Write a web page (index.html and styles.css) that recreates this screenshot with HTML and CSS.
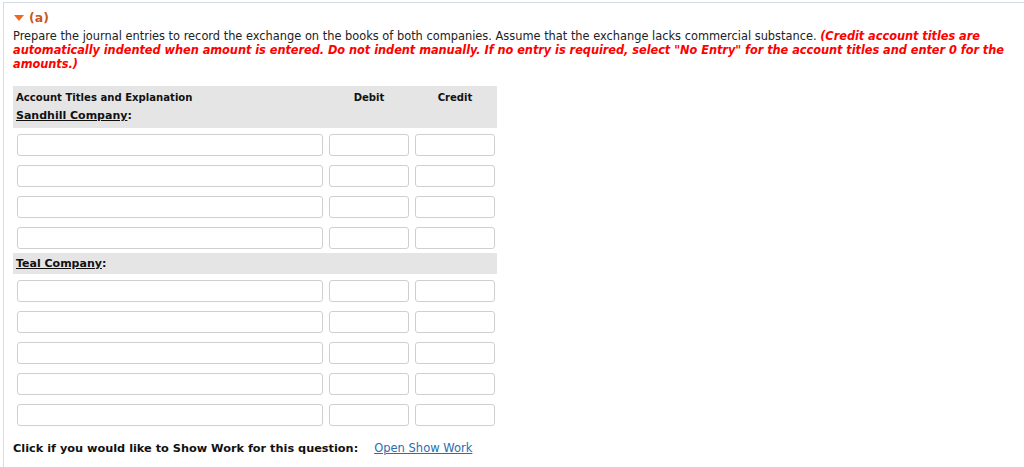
FILE: index.html
```html
<!DOCTYPE html>
<html>
<head>
<meta charset="utf-8">
<link rel="stylesheet" href="styles.css">
</head>
<body>
<div class="panel">
  <div class="part-head">
    <svg class="tri" width="10" height="6" viewBox="0 0 10 6"><polygon points="0,0 10,0 5,6" fill="#f26522"/></svg>
    <span class="part-label">(a)</span>
  </div>
  <p class="prompt">Prepare the journal entries to record the exchange on the books of both companies. Assume that the exchange lacks commercial substance. <em class="note">(Credit account titles are automatically indented when amount is entered. Do not indent manually. If no entry is required, select "No Entry" for the account titles and enter 0 for the amounts.)</em></p>

  <div class="journal">
    <div class="head">
      <div class="cols">
        <span class="c-acct">Account Titles and Explanation</span>
        <span class="c-debit">Debit</span>
        <span class="c-credit">Credit</span>
      </div>
      <div class="company"><u>Sandhill Company</u>:</div>
    </div>
    <div class="rows">
      <div class="row"><div class="in acct"></div><div class="in amt"></div><div class="in amt"></div></div>
      <div class="row"><div class="in acct"></div><div class="in amt"></div><div class="in amt"></div></div>
      <div class="row"><div class="in acct"></div><div class="in amt"></div><div class="in amt"></div></div>
      <div class="row"><div class="in acct"></div><div class="in amt"></div><div class="in amt"></div></div>
    </div>
    <div class="head sub">
      <div class="company"><u>Teal Company</u>:</div>
    </div>
    <div class="rows">
      <div class="row"><div class="in acct"></div><div class="in amt"></div><div class="in amt"></div></div>
      <div class="row"><div class="in acct"></div><div class="in amt"></div><div class="in amt"></div></div>
      <div class="row"><div class="in acct"></div><div class="in amt"></div><div class="in amt"></div></div>
      <div class="row"><div class="in acct"></div><div class="in amt"></div><div class="in amt"></div></div>
      <div class="row"><div class="in acct"></div><div class="in amt"></div><div class="in amt"></div></div>
    </div>
  </div>

  <div class="showwork">
    <span class="sw-label">Click if you would like to Show Work for this question:</span>
    <a class="sw-link" href="#">Open Show Work</a>
  </div>
</div>
</body>
</html>
```

FILE: styles.css
```css
html, body {
  margin: 0;
  padding: 0;
  background: #fff;
}
body {
  font-family: "DejaVu Sans", Verdana, sans-serif;
  font-size: 11.4px;
  color: #222;
}
.panel {
  margin: 2px 0 0 3px;
  border-top: 1px solid #d6dde6;
  border-left: 1px solid #d6dde6;
  padding: 7px 0 0 9px;
  height: 470px;
  box-sizing: border-box;
}
.part-head {
  display: flex;
  align-items: center;
  height: 14px;
}
.tri {
  margin: 1px 5px 0 1px;
}
.part-label {
  color: #c8581e;
  font-size: 12.5px;
  font-weight: bold;
}
.prompt {
  margin: 5px 0 0 0;
  line-height: 14px;
  padding-right: 4px;
}
.note {
  color: #ff0000;
  font-weight: bold;
  font-style: italic;
  letter-spacing: -0.06px;
}
.journal {
  width: 484px;
  margin-top: 15px;
}
.head {
  background: #e5e5e5;
  padding: 3px 0 2px 3px;
  font-weight: bold;
  color: #111;
  font-size: 10.1px;
}
.cols {
  display: flex;
  height: 16px;
  align-items: center;
}
.cols span { flex-shrink: 0; }
.c-acct { width: 319px; }
.c-debit { width: 68px; text-align: center; }
.c-credit { width: 78px; margin-left: 13px; text-align: center; }
.company {
  height: 21px;
  display: flex;
  align-items: center;
  font-size: 11px;
}
.head.sub {
  padding: 0 0 0 3px;
  height: 21px;
  display: flex;
  align-items: center;
}
.rows {
  display: flex;
  flex-direction: column;
  gap: 9px;
  padding: 6px 2px 4px 4px;
}
.row {
  display: flex;
  gap: 6px;
}
.in {
  height: 22px;
  box-sizing: border-box;
  border: 1px solid #cfcfcf;
  border-radius: 3px;
  background: #fff;
}
.acct { width: 306px; }
.amt { width: 80px; }
.showwork {
  margin-top: 11px;
  display: flex;
  align-items: center;
  gap: 16px;
  height: 14px;
}
.sw-label {
  font-weight: bold;
  color: #111;
  font-size: 11.3px;
}
.sw-link {
  color: #2a6eb0;
  text-decoration: underline;
  font-size: 11.5px;
}
```
